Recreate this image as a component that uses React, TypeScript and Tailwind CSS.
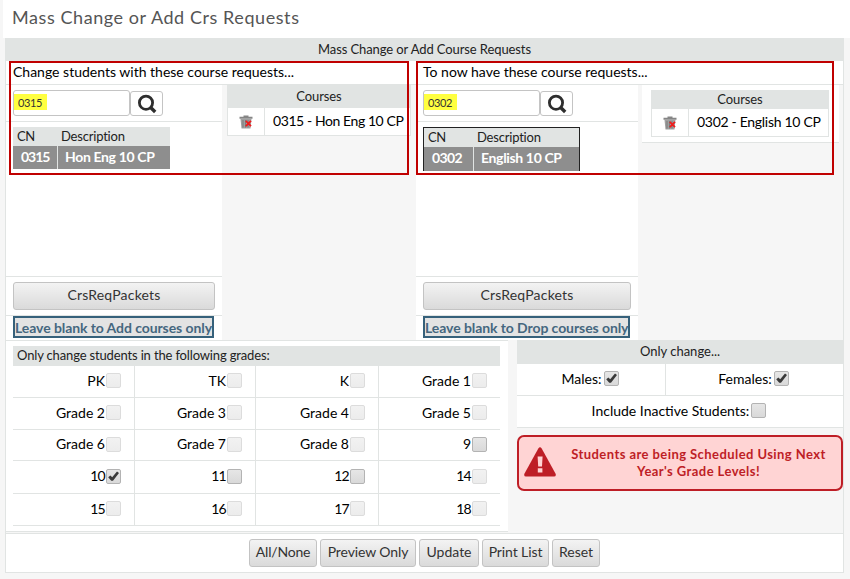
import { clsx } from 'clsx';

const grades = [
  { height: 'h-8', cells: [{ label: 'PK' }, { label: 'TK' }, { label: 'K' }, { label: 'Grade 1' }] },
  { height: 'h-8', cells: [{ label: 'Grade 2' }, { label: 'Grade 3' }, { label: 'Grade 4' }, { label: 'Grade 5' }] },
  { height: 'h-[31px]', cells: [{ label: 'Grade 6' }, { label: 'Grade 7' }, { label: 'Grade 8' }, { label: '9', enabled: true }] },
  { height: 'h-[33px]', cells: [{ label: '10', enabled: true, checked: true }, { label: '11', enabled: true }, { label: '12', enabled: true }, { label: '14' }] },
  { height: 'h-8', cells: [{ label: '15' }, { label: '16' }, { label: '17' }, { label: '18' }] },
];

const Checkbox = ({ enabled = false, checked = false }) => (
  <span
    className={clsx(
      'block w-[15px] h-[15px] shrink-0 rounded-[2px] border bg-linear-to-b',
      enabled ? 'border-[#b3b3b3] from-[#e6e6e6] to-[#d9d9d9]' : 'border-[#dcdcdc] from-[#f2f2f2] to-[#ececec]'
    )}
  >
    {checked && (
      <svg viewBox="0 0 13 13" className="w-[13px] h-[13px]">
        <path d="M1.2 7.2 L3.4 5.4 L5.2 7.2 L10 1.4 L12 3 L6 10.8 L4.2 10.8 Z" fill="#3a3a3a" />
      </svg>
    )}
  </span>
);

const TrashIcon = () => (
  <svg viewBox="0 0 14 14" className="w-[14px] h-[14px]">
    <path d="M4.5 0.5h5v1.2h4v2h-13v-2h4z" fill="#858585" />
    <path d="M1.5 4h11l-1 9.5h-9z" fill="#a0a0a0" />
    <path d="M4 5v7.5M6.5 5v7.5M9 5v7.5" stroke="#7b7b7b" strokeWidth="1" />
    <path d="M6.8 5.8l5.2 5.4M12 5.8l-5.2 5.4" stroke="#ee1c1c" strokeWidth="1.8" />
  </svg>
);

const WarningIcon = () => (
  <svg viewBox="0 0 32 30" className="w-8 h-[30px]">
    <path d="M14.3 1.4 Q16 -1 17.7 1.4 L31.6 26.8 Q32.4 29.4 30 29.5 H2 Q-0.4 29.4 0.4 26.8 Z" fill="#be1e26" />
    <path d="M13.6 9.5h5l-.6 10h-3.8zM13.8 21.3h4.6v4.2h-4.6z" fill="#ffd4d4" />
  </svg>
);

const Button = ({ children, className = '' }) => (
  <button
    className={clsx(
      'h-7 pb-[2px] rounded-[3px] border border-[#c3c3c3] bg-linear-to-b from-[#f3f3f3] to-[#dadada] text-sm leading-none text-[#333] whitespace-nowrap',
      className
    )}
  >
    {children}
  </button>
);

// Search box, matching course list and the packet button
const CoursePicker = ({ code, name, outlined = false, note, noteClass }) => (
  <>
    <div className="h-[37px] pl-[7px] pt-[5px] flex border-b border-[#e1e4e3]">
      <div className="w-[117px] h-[26px] rounded-[3px] border border-[#c4c4c4] flex items-start pt-[3px]">
        <span className="w-[33px] h-4 pl-1 bg-[#ffff40] text-[11px] leading-[17px] tracking-[-0.4px] text-[#333]">{code}</span>
      </div>
      <div className="mt-px w-[33px] h-[25px] rounded-[3px] border border-[#c4c4c4] flex items-center justify-center">
        <svg viewBox="0 0 20 20" className="w-5 h-5" fill="none" stroke="#2e2e2e">
          <circle cx="9" cy="8.7" r="6.6" strokeWidth="2.8" />
          <path d="M13.4 13.2 L18.2 18" strokeWidth="3.4" />
        </svg>
      </div>
    </div>
    <div className="h-[155px] pl-[7px] pt-[5px] border-b border-[#e1e4e3]">
      <div className={clsx('w-[157px]', outlined ? 'h-[44px] border border-b-0 border-[#222]' : 'h-[42px]')}>
        <div className="h-[19px] flex bg-[#e1e4e3] text-[13px] leading-[19px] text-[#222]">
          <span className={clsx('pl-1 tracking-[-0.5px]', outlined ? 'w-[49px]' : 'w-[44px]')}>CN</span>
          <span className="pl-1 tracking-[-0.2px]">Description</span>
        </div>
        <div className={clsx('flex bg-[#8e8e8e] text-sm font-bold text-white', outlined ? 'h-6 leading-[22px]' : 'h-[23px] leading-[22px]')}>
          <span className={clsx('border-r border-[#e1e4e3] pl-2', outlined ? 'w-[50px] tracking-[-0.6px]' : 'w-[45px] tracking-[-1px]')}>{code}</span>
          <span className="pl-[7px] tracking-[-0.35px]">{name}</span>
        </div>
      </div>
    </div>
    <div className="h-[39px] pt-[5px] pl-[7px] border-b border-[#e1e4e3]">
      <Button className={clsx('tracking-[0.2px]', outlined ? 'w-[208px]' : 'w-[202px]')}>CrsReqPackets</Button>
    </div>
    <div className="h-6 pl-[7px]">
      <div
        className={clsx(
          'h-[22px] border-2 border-[#36617b] bg-[#e3e3e3] text-[14px] leading-[19px] tracking-[-0.08px] font-bold text-[#45677f] whitespace-nowrap',
          noteClass
        )}
      >
        {note}
      </div>
    </div>
  </>
);

const CourseTable = ({ course, headClass, textClass }) => (
  <div className="bg-white border-r border-b border-[#e1e4e3]">
    <div className={clsx('flex items-center justify-center pl-px bg-[#e1e4e3] text-[13px] tracking-[-0.1px] text-[#222]', headClass)}>
      Courses
    </div>
    <div className="h-[27px] flex">
      <div className="w-[38px] border-x border-[#e1e4e3] flex items-center justify-center">
        <TrashIcon />
      </div>
      <div className={clsx('flex-1 pl-2 text-sm leading-[25px] whitespace-nowrap', textClass)}>{course}</div>
    </div>
  </div>
);

export default function App() {
  return (
    <div className="relative w-[850px] h-[579px] overflow-hidden bg-[#f6f6f6] font-['Lato','Liberation_Sans',sans-serif] text-black">
      <h1 className="ml-[3px] h-[38px] pl-[9px] bg-white text-lg leading-[35px] tracking-[0.57px] text-[#555]">
        Mass Change or Add Crs Requests
      </h1>

      <div className="ml-[5px] w-[839px] h-[535px] border border-t-0 border-[#e1e4e3]">
        <div className="h-[23px] bg-[#e1e4e3] text-center text-[13px] leading-[23px] tracking-[-0.1px] text-[#222]">
          Mass Change or Add Course Requests
        </div>
        <div className="h-6 flex bg-white border-b border-[#e1e4e3] text-sm leading-[22px]">
          <div className="w-[410px] pl-[7px]">Change students with these course requests...</div>
          <div className="pl-[7px]">To now have these course requests...</div>
        </div>

        <div className="h-[255px] flex">
          <div className="w-[216px] bg-white">
            <CoursePicker code="0315" name="Hon Eng 10 CP" note="Leave blank to Add courses only" noteClass="w-[201px]" />
          </div>
          <div className="w-[194px] pl-[5px]">
            <div className="w-[184px]">
              <CourseTable course="0315 - Hon Eng 10 CP" headClass="h-[23px]" textClass="tracking-[-0.42px]" />
            </div>
          </div>
          <div className="w-[222px] bg-white">
            <CoursePicker code="0302" name="English 10 CP" outlined note="Leave blank to Drop courses only" noteClass="w-[207px]" />
          </div>
          <div className="pl-1">
            <div className="w-[197px] h-[58px] pt-[5px] pl-[9px] pr-[10px] bg-white border-b border-[#e1e4e3]">
              <CourseTable course="0302 - English 10 CP" headClass="h-[19px]" textClass="tracking-[-0.3px]" />
            </div>
          </div>
        </div>

        <div className="h-[193px] flex">
          <div className="w-[502px] h-[192px] pt-[5px] pl-[7px] bg-white border-t border-b border-[#e1e4e3]">
            <div className="w-[487px]">
              <div className="h-5 pl-1 bg-[#e1e4e3] text-[13px] leading-[19px] tracking-[-0.15px] text-[#222]">
                Only change students in the following grades:
              </div>
              {grades.map((row, i) => (
                <div key={i} className={clsx('grid grid-cols-[122px_121px_123px_121px] border-b border-[#e1e4e3]', row.height)}>
                  {row.cells.map((cell, j) => (
                    <div
                      key={cell.label}
                      className={clsx('flex items-center justify-end pb-[2px] pr-[13px] text-sm border-[#e1e4e3]', j < 3 && 'border-r')}
                    >
                      <span className={clsx('pr-px', i > 2 && 'tracking-[-0.7px]')}>{cell.label}</span>
                      <Checkbox {...cell} />
                    </div>
                  ))}
                </div>
              ))}
            </div>
          </div>

          <div className="w-[326px] ml-[9px]">
            <div className="h-6 bg-[#e1e4e3] text-center text-[13px] leading-[23px] text-[#222]">Only change...</div>
            <div className="h-8 flex bg-white border-b border-[#e1e4e3] text-sm">
              <div className="w-[149px] pr-[2px] pb-[2px] border-r border-[#e1e4e3] flex items-center justify-center">
                <span className="pr-[2px]">Males:</span>
                <Checkbox enabled checked />
              </div>
              <div className="flex-1 pr-[2px] pb-[2px] flex items-center justify-center">
                <span className="pr-[2px]">Females:</span>
                <Checkbox enabled checked />
              </div>
            </div>
            <div className="h-8 pr-[2px] pb-[2px] flex items-center justify-center bg-white border-b border-[#e1e4e3] text-sm">
              <span className="pr-[2px]">Include Inactive Students:</span>
              <Checkbox enabled />
            </div>
            <div className="mt-[7px] h-14 flex items-center rounded-[7px] border-2 border-[#be1e26] bg-[#ffd4d4] text-[#be1e26]">
              <div className="ml-[5px] pb-[3px]">
                <WarningIcon />
              </div>
              <div className="flex-1 text-center text-[13px] leading-[17px] tracking-[0.43px] font-bold">
                Students are being Scheduled Using Next
                <br />
                Year's Grade Levels!
              </div>
            </div>
          </div>
        </div>

        <div className="h-[39px] pt-[5px] pl-[243px] flex gap-[3px] bg-white border-t border-[#e1e4e3]">
          <Button className="w-[68px] tracking-[-0.2px]">All/None</Button>
          <Button className="w-[96px] tracking-[-0.1px]">Preview Only</Button>
          <Button className="w-[60px]">Update</Button>
          <Button className="w-[67px] tracking-[-0.1px]">Print List</Button>
          <Button className="w-[48px]">Reset</Button>
        </div>
      </div>

      {/* Highlight boxes over both course request areas */}
      <div className="absolute left-[9px] top-[61px] w-[400px] h-[114px] border-2 border-[#c00000]" />
      <div className="absolute left-[416px] top-[61px] w-[418px] h-[114px] border-2 border-[#c00000]" />
    </div>
  );
}
